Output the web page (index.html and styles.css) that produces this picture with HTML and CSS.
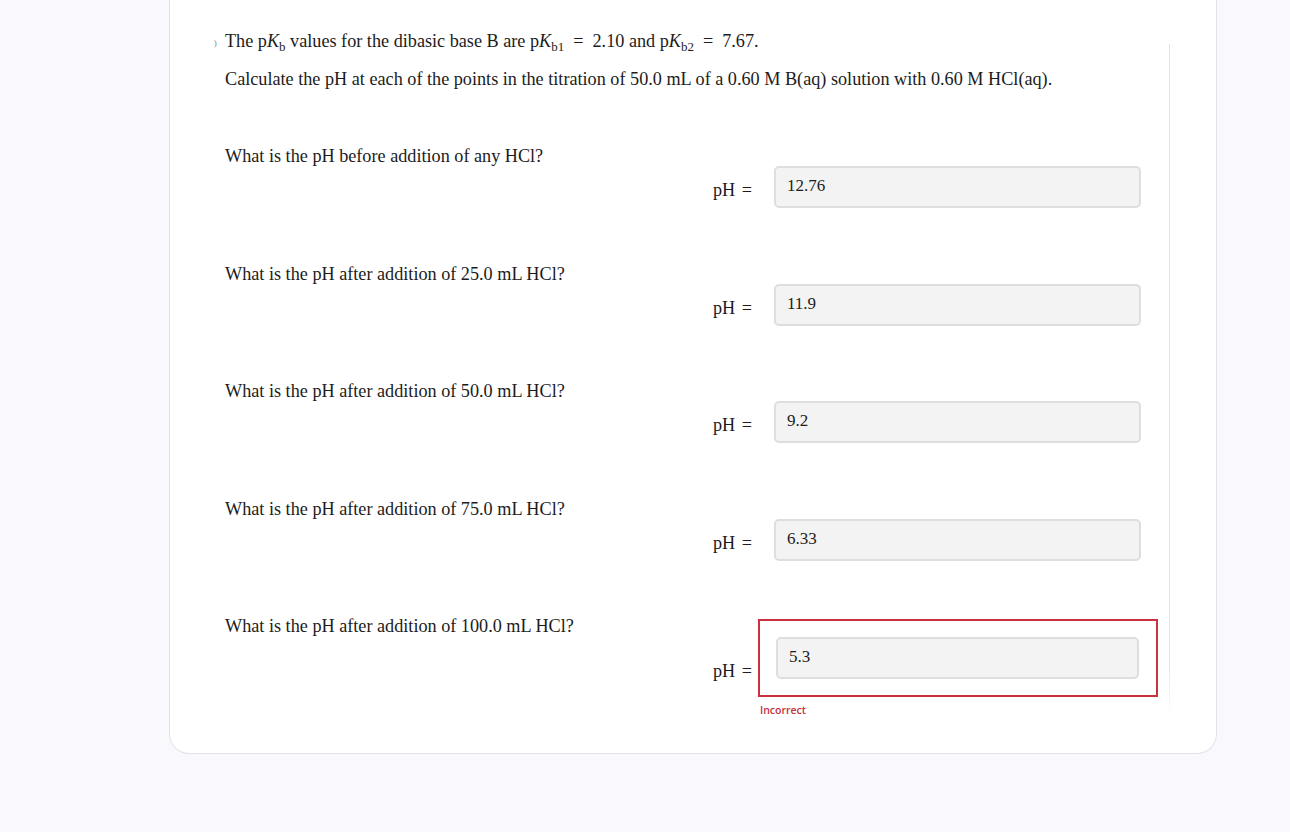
FILE: index.html
```html
<!DOCTYPE html>
<html>
<head>
<meta charset="utf-8">
<link rel="stylesheet" href="styles.css">
</head>
<body>
<div class="card">
  <div class="content">
    <p class="intro first"><span class="mark">)</span>The p<i>K</i><sub>b</sub> values for the dibasic base B are p<i>K</i><sub>b1</sub><span class="eq">=</span>2.10 and p<i>K</i><sub>b2</sub><span class="eq">=</span>7.67.</p>
    <p class="intro second">Calculate the pH at each of the points in the titration of 50.0 mL of a 0.60 M B(aq) solution with 0.60 M HCl(aq).</p>

    <div class="block">
      <p class="question">What is the pH before addition of any HCl?</p>
      <div class="answer">
        <span class="label">pH =</span>
        <div class="field"><input class="input" type="text" value="12.76" readonly></div>
      </div>
    </div>

    <div class="block">
      <p class="question">What is the pH after addition of 25.0 mL HCl?</p>
      <div class="answer">
        <span class="label">pH =</span>
        <div class="field"><input class="input" type="text" value="11.9" readonly></div>
      </div>
    </div>

    <div class="block">
      <p class="question">What is the pH after addition of 50.0 mL HCl?</p>
      <div class="answer">
        <span class="label">pH =</span>
        <div class="field"><input class="input" type="text" value="9.2" readonly></div>
      </div>
    </div>

    <div class="block">
      <p class="question">What is the pH after addition of 75.0 mL HCl?</p>
      <div class="answer">
        <span class="label">pH =</span>
        <div class="field"><input class="input" type="text" value="6.33" readonly></div>
      </div>
    </div>

    <div class="block last">
      <p class="question">What is the pH after addition of 100.0 mL HCl?</p>
      <div class="answer error-row">
        <span class="label">pH =</span>
        <div class="field-col">
          <div class="field error"><input class="input" type="text" value="5.3" readonly></div>
          <div class="message">Incorrect</div>
        </div>
      </div>
    </div>
  </div>
</div>
</body>
</html>
```

FILE: styles.css
```css
html, body {
  margin: 0;
  padding: 0;
}

body {
  background: #f9f9fd;
  font-family: "Liberation Serif", "Times New Roman", serif;
  color: #1c1c1c;
  font-size: 18.2px;
}

.card {
  width: 1048px;
  box-sizing: border-box;
  margin-left: 169px;
  background: #ffffff;
  border: 1px solid #e2e2ea;
  border-top: none;
  border-radius: 0 0 20px 20px;
  padding: 30px 46px 35px 55px;
}

.content {
  width: 945px;
  box-sizing: border-box;
  padding-right: 12px;
  background-image: linear-gradient(to bottom, #e4e4e4 92%, rgba(228, 228, 228, 0));
  background-repeat: no-repeat;
  background-size: 1px calc(100% - 14px);
  background-position: right 0 top 14px;
}

.intro {
  margin: 0;
  line-height: 22px;
  white-space: nowrap;
}

.intro.second {
  margin-top: 13px;
  margin-bottom: 55px;
}

.mark {
  display: inline-block;
  width: 11px;
  margin-left: -11px;
  font-size: 8px;
  color: #777;
  vertical-align: 1px;
}

.intro i {
  font-style: italic;
}

.intro sub {
  font-size: 13px;
  line-height: 0;
  vertical-align: -4px;
}

.eq {
  padding: 0 9px 0 9px;
}

.block {
  margin-bottom: 38.5px;
}

.block.last {
  margin-bottom: 0;
}

.question {
  margin: 0;
  line-height: 22px;
}

.answer {
  display: flex;
  justify-content: flex-end;
  align-items: center;
  margin-top: -17px;
}

.label {
  margin-right: 6px;
  margin-top: 6px;
  line-height: 22px;
  white-space: nowrap;
  word-spacing: 2px;
}

.field {
  width: 400px;
  box-sizing: border-box;
  padding: 16px 17px 16px 16px;
}

.field.error {
  border: 2px solid #c8313d;
}

.error-row {
  margin-top: -18px;
  align-items: flex-start;
}

.error-row .label {
  align-self: flex-end;
  margin-top: 0;
  margin-bottom: 36px;
}

.field-col {
  display: flex;
  flex-direction: column;
}

.message {
  margin-top: 5px;
  padding-left: 2px;
  height: 16px;
  line-height: 16px;
  font-family: "Open Sans", "Liberation Sans", sans-serif;
  font-weight: 600;
  font-size: 10.5px;
  color: #c4303c;
}

.input {
  display: block;
  width: 100%;
  height: 42px;
  box-sizing: border-box;
  margin: 0;
  border: 2px solid #dedede;
  border-radius: 5px;
  background: #f3f3f3;
  padding: 0 11px 2px 11px;
  font-family: "Liberation Serif", "Times New Roman", serif;
  font-size: 17px;
  color: #1c1c1c;
  outline: none;
}
```
